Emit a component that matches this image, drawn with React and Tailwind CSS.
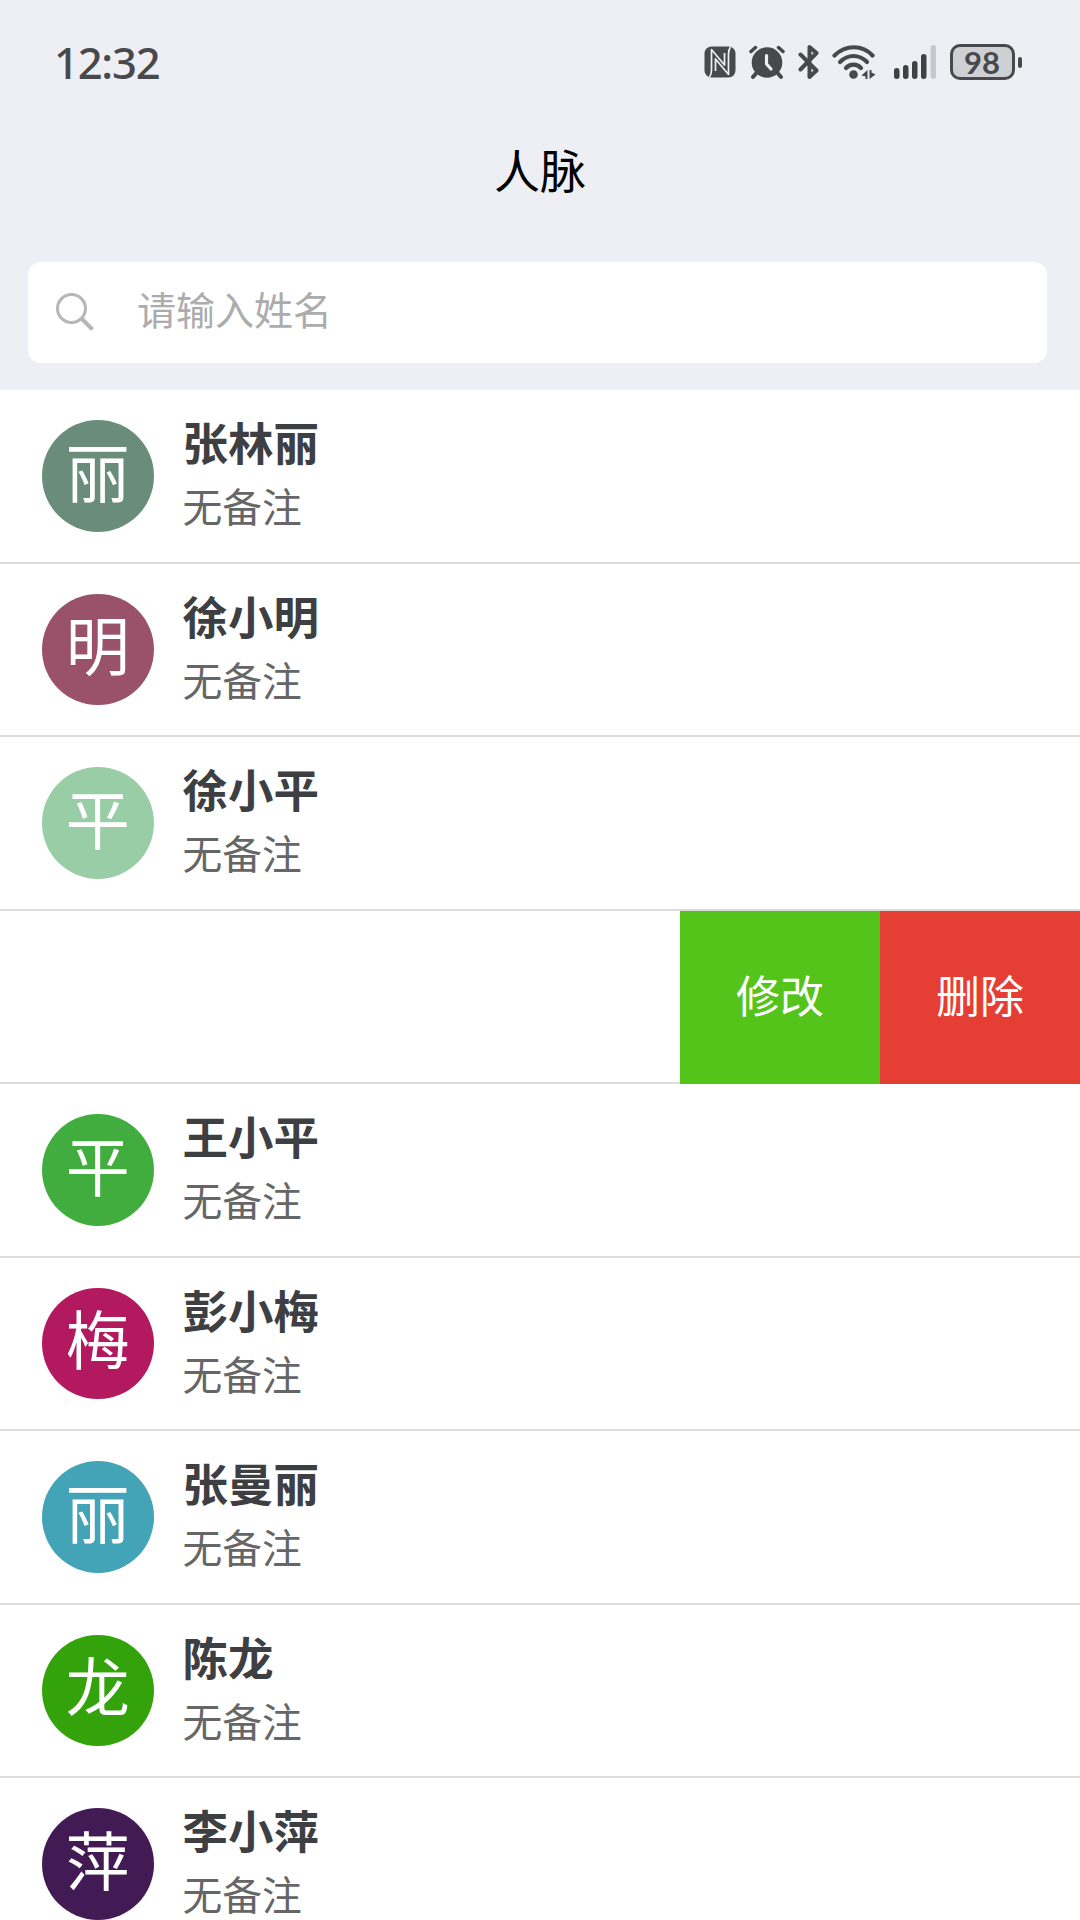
import { useState } from 'react'

const initialContacts = [
  { id: 1, name: '张林丽', color: '#698c7b' },
  { id: 2, name: '徐小明', color: '#9a526b' },
  { id: 3, name: '徐小平', color: '#99cda5' },
  { id: 4, name: '', color: '' },
  { id: 5, name: '王小平', color: '#42ad3f' },
  { id: 6, name: '彭小梅', color: '#b3195f' },
  { id: 7, name: '张曼丽', color: '#43a3b7' },
  { id: 8, name: '陈龙', color: '#34a30b' },
  { id: 9, name: '李小萍', color: '#431b54' },
]

function NfcIcon() {
  return (
    <svg width="32" height="32" viewBox="0 0 32 32" fill="none" stroke="#eeeff4" strokeWidth="1.7" strokeLinejoin="round">
      <rect x="0.5" y="0.5" width="31" height="31" rx="7" fill="#47494d" stroke="none" />
      <path d="M5.5 31C7 29 7.500 27 7.500 24V3.500L20.500 19V7" />
      <path d="M26.500 1C25 3 24.500 5 24.500 8V28.500L11.500 13V25" />
    </svg>
  )
}

function AlarmIcon() {
  return (
    <svg width="36" height="36" viewBox="0 0 36 36" fill="none" stroke="#47494d" strokeLinecap="round">
      <circle cx="18" cy="18.500" r="15.300" fill="#47494d" stroke="none" />
      <path d="M2 7.5 6.500 3.500M34 7.5 29.500 3.500" strokeWidth="3.500" />
      <path d="M7 29.500l-3 3.500M29 29.500l3 3.500" strokeWidth="4" />
      <path d="M17.5 11.500v8.500l4.500 5" stroke="#eeeff4" strokeWidth="3.200" />
    </svg>
  )
}

function BluetoothIcon() {
  return (
    <svg width="22" height="36" viewBox="0 0 22 36" fill="none" stroke="#47494d" strokeWidth="4" strokeLinecap="round" strokeLinejoin="round">
      <path d="M2.500 10.500 18.500 26.500 11.500 33V3L18.500 9 2.500 25.500" />
    </svg>
  )
}

function WifiIcon() {
  return (
    <svg width="44" height="36" viewBox="0 0 44 36" fill="none" stroke="#47494d" strokeWidth="4.2" strokeLinecap="round">
      <path d="M2.500 11.500C13.500.500 30.500.500 40.500 11.500" />
      <path d="M8 18C16 10 27 10 35 18" />
      <path d="M14 24C18 19.500 25 19.500 29 24" />
      <circle cx="21.500" cy="30.500" r="4.300" fill="#47494d" stroke="none" />
      <path d="M35.500 26V35H33.500V32.500L29.500 31.500ZM37.500 26H39.500V28.500L43.500 30.500 37.500 35Z" fill="#47494d" stroke="none" />
    </svg>
  )
}

function SignalIcon() {
  return (
    <svg width="43" height="34" viewBox="0 0 43 34" fill="#3f4145">
      <rect x="0" y="23" width="5.500" height="11" rx="2.700" />
      <rect x="9" y="20" width="5.500" height="14" rx="2.700" />
      <rect x="18" y="16" width="5.500" height="18" rx="2.700" />
      <rect x="27" y="9" width="5.500" height="25" rx="2.700" />
      <rect x="36.500" y="0" width="5.500" height="34" rx="2.700" fill="#c8c9cd" />
    </svg>
  )
}

function StatusBar() {
  return (
    <div className="flex h-[124px] items-center justify-between pr-[58px] pl-[54px]">
      <span className="pt-[1px] text-[43.5px] leading-none font-medium tracking-[-1.2px] text-[#47494d] font-['Noto_Sans',sans-serif]">12:32</span>
      <div className="flex items-center">
        <NfcIcon />
        <div className="ml-[13px]"><AlarmIcon /></div>
        <div className="ml-[13px]"><BluetoothIcon /></div>
        <div className="ml-[12px]"><WifiIcon /></div>
        <div className="ml-[18px]"><SignalIcon /></div>
        <div className="ml-[13px] flex h-[36px] w-[65px] items-center justify-center rounded-[10px] border-[3px] border-[#47494d] bg-[#cfd0d3] pr-[1px] text-[31px] leading-none font-bold text-[#47494d] font-['Lato',sans-serif]">
          98
        </div>
        <div className="ml-[3px] h-[11px] w-[4px] rounded-full bg-[#47494d]" />
      </div>
    </div>
  )
}

function SearchBar() {
  const [keyword, setKeyword] = useState('')

  return (
    <div className="ml-[28px] flex h-[101px] w-[1019px] items-center rounded-[13px] bg-white pl-[28px]">
      <svg width="39" height="39" viewBox="0 0 39 39" fill="none" stroke="#b6b6b9">
        <circle cx="15.500" cy="15.500" r="14" strokeWidth="3" />
        <path d="M25.500 25.500 36.500 36.500" strokeWidth="4" />
      </svg>
      <input
        value={keyword}
        onChange={(e) => setKeyword(e.target.value)}
        placeholder="请输入姓名"
        className="ml-[42px] h-[60px] flex-1 bg-transparent pb-[10px] text-[39px] text-[#3e3f42] outline-none placeholder:text-[#acacac]"
      />
    </div>
  )
}

function ContactRow({ contact }) {
  return (
    <div className="flex h-[173.5px] border-b-2 border-[#dcdcdc] pt-[30px] pl-[42px]">
      <div
        className="flex size-[111.5px] shrink-0 items-center justify-center rounded-full pb-[14px] text-[64px] leading-none text-white"
        style={{ backgroundColor: contact.color }}
      >
        {contact.name.slice(-1)}
      </div>
      <div className="ml-[29px]">
        <div className="text-[45.5px] leading-[42px] font-bold text-[#3e3f42]">{contact.name}</div>
        <div className="mt-[20px] text-[39.8px] leading-[46px] text-[#666]">无备注</div>
      </div>
    </div>
  )
}

// Row swiped fully to the left, only its actions are visible
function SwipedRow() {
  return (
    <div className="flex h-[173.5px] justify-end text-[44px] text-white">
      <div className="flex-1 border-b-2 border-[#dcdcdc]" />
      <button className="w-[200px] bg-[#54c41b] pb-[7px]">修改</button>
      <button className="w-[200px] bg-[#e53e35] pb-[7px]">删除</button>
    </div>
  )
}

export default function App() {
  const [swipedId] = useState(4)

  return (
    <main className="h-[1920px] w-[1080px] overflow-hidden bg-white font-['Noto_Sans_CJK_SC',sans-serif]">
      <header className="h-[390px] bg-[#eeeff4]">
        <StatusBar />
        <h1 className="flex h-[138px] justify-center pt-[9px] text-[46px] leading-[70px] text-black">人脉</h1>
        <SearchBar />
      </header>
      <div>
        {initialContacts.map((contact) =>
          contact.id === swipedId ? (
            <SwipedRow key={contact.id} />
          ) : (
            <ContactRow key={contact.id} contact={contact} />
          )
        )}
      </div>
    </main>
  )
}
